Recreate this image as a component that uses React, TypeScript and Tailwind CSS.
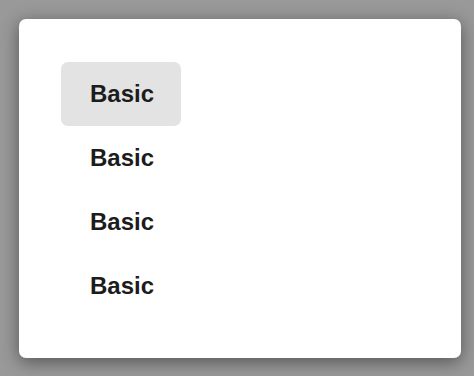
const items = ['Basic', 'Basic', 'Basic', 'Basic'];

export default function App() {
  return (
    <div className="h-[376px] w-[474px] bg-[#999999] pt-[19px] pl-[19px]">
      <div className="flex h-[339px] w-[442px] flex-col rounded-[7px] bg-white px-[42px] pt-[43px] shadow-[0_4px_18px_rgba(0,0,0,0.45)]">
        {items.map((label, i) => (
          <div
            key={i}
            className={`flex h-16 w-[120px] items-center rounded-[7px] pl-[29px] ${i === 0 ? 'bg-[#e3e3e3]' : ''}`}
          >
            <span className="font-['Liberation_Sans',Arial,sans-serif] text-[24px] font-bold text-[#1c1c1c]">
              {label}
            </span>
          </div>
        ))}
      </div>
    </div>
  );
}
